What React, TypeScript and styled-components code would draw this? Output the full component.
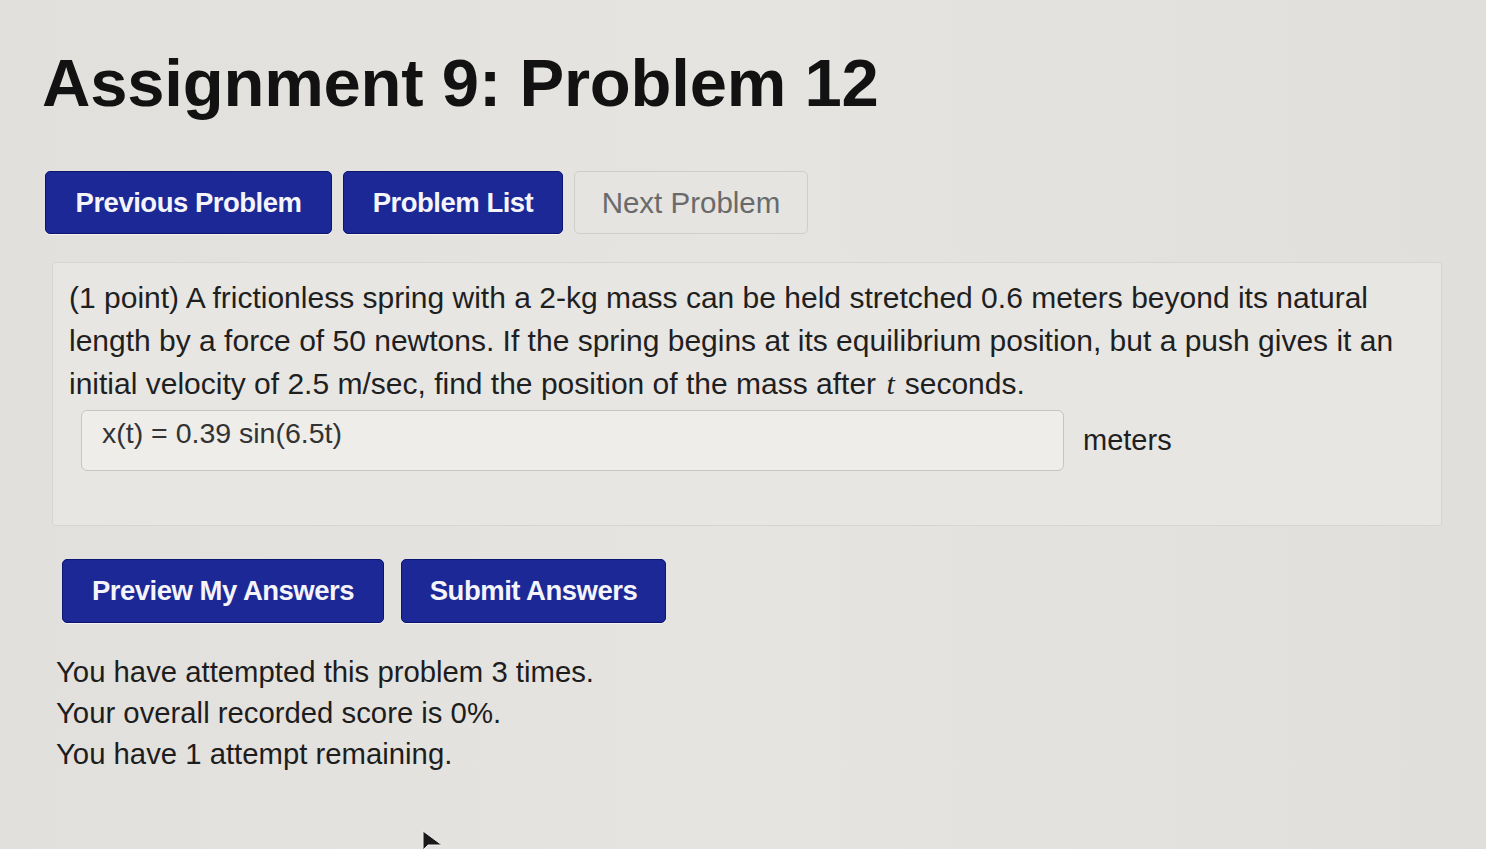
import React from "react";
import styled, { createGlobalStyle } from "styled-components";

const Global = createGlobalStyle`
  html, body { margin: 0; padding: 0; }
  body {
    background: #e3e1dd;
    font-family: "Liberation Sans", Arial, Helvetica, sans-serif;
    color: #1c1c1c;
  }
`;

const Page = styled.div`
  min-height: 849px;
  box-sizing: border-box;
  padding: 49px 0 0 42px;
  background: linear-gradient(90deg, #e2e0dc 0%, #e6e4e0 50%, #e1dfdb 100%);
  position: relative;
  overflow: hidden;
`;

const Title = styled.h1`
  margin: 0;
  font-size: 67px;
  line-height: 67px;
  font-weight: 700;
  color: #121212;
  letter-spacing: -0.2px;
`;

const ButtonRow = styled.div<{ $top: number; $left: number; $gap: number }>`
  display: flex;
  align-items: center;
  gap: ${(p) => p.$gap}px;
  margin: ${(p) => p.$top}px 0 0 ${(p) => p.$left}px;
`;

const Button = styled.button<{ $variant?: "primary" | "disabled"; $w: number; $h: number }>`
  box-sizing: border-box;
  width: ${(p) => p.$w}px;
  height: ${(p) => p.$h}px;
  padding: 0;
  border-radius: 5px;
  font-family: "Liberation Sans", Arial, sans-serif;
  cursor: pointer;
  ${(p) =>
    p.$variant === "disabled"
      ? `
    background: #e5e4e1;
    border: 1px solid #cfcecb;
    color: #6a6a6a;
    font-size: 29.5px;
    font-weight: 400;
  `
      : `
    background: #1b2896;
    border: 1px solid #0c1670;
    color: #f4f4fa;
    font-size: 27.5px;
    font-weight: 700;
    letter-spacing: -0.5px;
    box-shadow: 0 1px 0 rgba(255,255,255,0.6);
  `}
`;

const Well = styled.div`
  box-sizing: border-box;
  width: 1390px;
  margin: 28px 0 0 10px;
  padding: 13px 16px 54px 16px;
  background: #e7e6e3;
  border: 1px solid #d6d5d1;
  border-radius: 3px;
`;

const ProblemText = styled.p`
  margin: 0;
  font-size: 30px;
  line-height: 43px;
  color: #1f1f1f;
`;

const Var = styled.span`
  display: inline-block;
  font-family: "Liberation Serif", "Times New Roman", serif;
  font-style: italic;
  margin: 0 10px 0 2px;
`;

const AnswerRow = styled.div`
  display: flex;
  align-items: center;
  margin: 5px 0 0 12px;
  gap: 19px;
`;

const AnswerInput = styled.div`
  box-sizing: border-box;
  width: 983px;
  height: 61px;
  padding: 0 0 14px 20px;
  display: flex;
  align-items: center;
  background: #eeedea;
  border: 1px solid #c6c5c1;
  border-radius: 6px;
  font-size: 28.5px;
  color: #333;
`;

const Unit = styled.span`
  font-size: 29px;
  color: #1f1f1f;
`;

const Status = styled.div`
  margin: 28px 0 0 14px;
  font-size: 29.3px;
  line-height: 41px;
  color: #1d1d1d;
`;

const Pointer = styled.svg`
  position: absolute;
  left: 422px;
  top: 830px;
`;

export default function App() {
  return (
    <>
      <Global />
      <Page>
        <Title>Assignment 9: Problem 12</Title>
        <ButtonRow $top={55} $left={3} $gap={11}>
          <Button $w={287} $h={63}>Previous Problem</Button>
          <Button $w={220} $h={63}>Problem List</Button>
          <Button $variant="disabled" $w={234} $h={63}>Next Problem</Button>
        </ButtonRow>
        <Well>
          <ProblemText>
            (1 point) A frictionless spring with a 2-kg mass can be held stretched 0.6 meters beyond its natural
            length by a force of 50 newtons. If the spring begins at its equilibrium position, but a push gives it an
            initial velocity of 2.5 m/sec, find the position of the mass after <Var>t</Var>seconds.
          </ProblemText>
          <AnswerRow>
            <AnswerInput>x(t) = 0.39 sin(6.5t)</AnswerInput>
            <Unit>meters</Unit>
          </AnswerRow>
        </Well>
        <ButtonRow $top={33} $left={20} $gap={17}>
          <Button $w={322} $h={64}>Preview My Answers</Button>
          <Button $w={265} $h={64}>Submit Answers</Button>
        </ButtonRow>
        <Status>
          You have attempted this problem 3 times.
          <br />
          Your overall recorded score is 0%.
          <br />
          You have 1 attempt remaining.
        </Status>
        <Pointer width="22" height="22" viewBox="0 0 22 22">
          <path d="M1 1 L1 20 L6 15 L20 15 Z" fill="#1a1a1a" stroke="#f0f0f0" strokeWidth="1" />
        </Pointer>
      </Page>
    </>
  );
}
